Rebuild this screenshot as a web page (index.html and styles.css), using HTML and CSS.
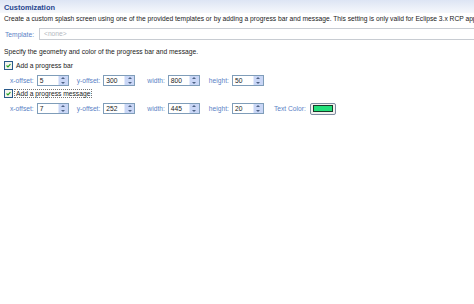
FILE: index.html
```html
<!DOCTYPE html>
<html>
<head>
<meta charset="utf-8">
<link rel="stylesheet" href="styles.css">
</head>
<body>
<div class="page">
  <div class="section-title">Customization</div>
  <div class="line desc">Create a custom splash screen using one of the provided templates or by adding a progress bar and message. This setting is only valid for Eclipse 3.x RCP applications.</div>
  <div class="template-row">
    <span class="label">Template:</span>
    <div class="combo">&lt;none&gt;</div>
  </div>
  <div class="line specify">Specify the geometry and color of the progress bar and message.</div>
  <div class="check-row cb1">
    <span class="check"><svg viewBox="0 0 9 9" width="9" height="9"><path d="M2 4.5 L3.8 6.3 L7 2.6" fill="none" stroke="#21a121" stroke-width="1.4"/></svg></span>
    <span class="check-label">Add a progress bar</span>
  </div>
  <div class="spin-row r1">
    <span class="label lx">x-offset:</span><div class="spin"><span class="val">5</span><span class="arrows"><i class="up"></i><i class="down"></i></span></div>
    <span class="label ly">y-offset:</span><div class="spin"><span class="val">300</span><span class="arrows"><i class="up"></i><i class="down"></i></span></div>
    <span class="label lw">width:</span><div class="spin"><span class="val">800</span><span class="arrows"><i class="up"></i><i class="down"></i></span></div>
    <span class="label lh">height:</span><div class="spin"><span class="val">50</span><span class="arrows"><i class="up"></i><i class="down"></i></span></div>
  </div>
  <div class="check-row cb2">
    <span class="check"><svg viewBox="0 0 9 9" width="9" height="9"><path d="M2 4.5 L3.8 6.3 L7 2.6" fill="none" stroke="#21a121" stroke-width="1.4"/></svg></span>
    <span class="check-label focus">Add a progress message</span>
  </div>
  <div class="spin-row r2">
    <span class="label lx">x-offset:</span><div class="spin"><span class="val">7</span><span class="arrows"><i class="up"></i><i class="down"></i></span></div>
    <span class="label ly">y-offset:</span><div class="spin"><span class="val">252</span><span class="arrows"><i class="up"></i><i class="down"></i></span></div>
    <span class="label lw">width:</span><div class="spin"><span class="val">445</span><span class="arrows"><i class="up"></i><i class="down"></i></span></div>
    <span class="label lh">height:</span><div class="spin"><span class="val">20</span><span class="arrows"><i class="up"></i><i class="down"></i></span></div>
    <span class="label lc">Text Color:</span><div class="color-btn"><span class="swatch"></span></div>
  </div>
</div>
</body>
</html>
```
FILE: styles.css
```css
html, body {
  margin: 0;
  padding: 0;
  background: #ffffff;
}
body {
  width: 474px;
  height: 304px;
  overflow: hidden;
  font-family: "Liberation Sans", "DejaVu Sans", sans-serif;
  font-size: 6.7px;
  color: #1a1a1a;
}
.page {
  display: flex;
  flex-direction: column;
}
.section-title {
  height: 13px;
  line-height: 16px;
  padding-left: 4px;
  font-weight: bold;
  font-size: 7.4px;
  color: #27468f;
  background: linear-gradient(#dde5f4, #f6f8fc);
}
.line {
  white-space: nowrap;
  overflow: hidden;
  padding-left: 4px;
}
.desc {
  height: 11px;
  line-height: 11px;
}
.template-row {
  display: flex;
  align-items: center;
  margin-top: 4px;
  height: 12px;
}
.template-row .label {
  width: 34px;
  padding-left: 5px;
}
.label {
  color: #5a7fc6;
  white-space: nowrap;
}
.combo {
  flex: 1;
  height: 10px;
  line-height: 10px;
  border: 1px solid #c8ccd2;
  border-right: none;
  padding-left: 4px;
  color: #b4b8c0;
}
.specify {
  margin-top: 7px;
  height: 10px;
  line-height: 10px;
}
.check-row {
  display: flex;
  align-items: center;
  height: 9px;
  padding-left: 4px;
}
.cb1 { margin-top: 4px; }
.cb2 { margin-top: 3px; }
.check {
  width: 7px;
  height: 7px;
  border: 1px solid #2a5a8a;
  background: #f4f4ee;
  display: flex;
  box-sizing: content-box;
}
.check svg {
  width: 7px;
  height: 7px;
}
.check-label {
  margin-left: 2px;
  line-height: 7px;
  padding: 0 1px;
}
.check-label.focus {
  outline: 1px dotted #777;
}
.spin-row {
  display: flex;
  align-items: center;
  height: 11px;
  padding-left: 10px;
}
.r1 { margin-top: 5px; }
.r2 { margin-top: 5px; }
.spin {
  display: flex;
  width: 30px;
  height: 9px;
  border: 1px solid #7f9db9;
  background: #fff;
  margin-left: 3px;
}
.val {
  flex: 1;
  line-height: 9px;
  padding-left: 2px;
}
.arrows {
  width: 9px;
  display: flex;
  flex-direction: column;
  background: #c9d6f6;
  border-left: 1px solid #e4ebfb;
}
.arrows i {
  flex: 1;
  display: flex;
  align-items: center;
  justify-content: center;
}
.arrows i::before {
  content: "";
  border-left: 2px solid transparent;
  border-right: 2px solid transparent;
}
.arrows .up::before {
  border-bottom: 2px solid #4d6185;
}
.arrows .down::before {
  border-top: 2px solid #4d6185;
}
.ly { margin-left: 8px; }
.lw { margin-left: 12px; }
.lh { margin-left: 9px; }
.lc { margin-left: 10px; }
.color-btn {
  margin-left: 4px;
  width: 24px;
  height: 10px;
  border: 1px solid #7d8aa0;
  border-radius: 2px;
  background: #f1f1ee;
  display: flex;
  align-items: center;
  justify-content: center;
}
.swatch {
  width: 18px;
  height: 5px;
  background: #22e07a;
  border: 1px solid #1a3a2a;
}
```
